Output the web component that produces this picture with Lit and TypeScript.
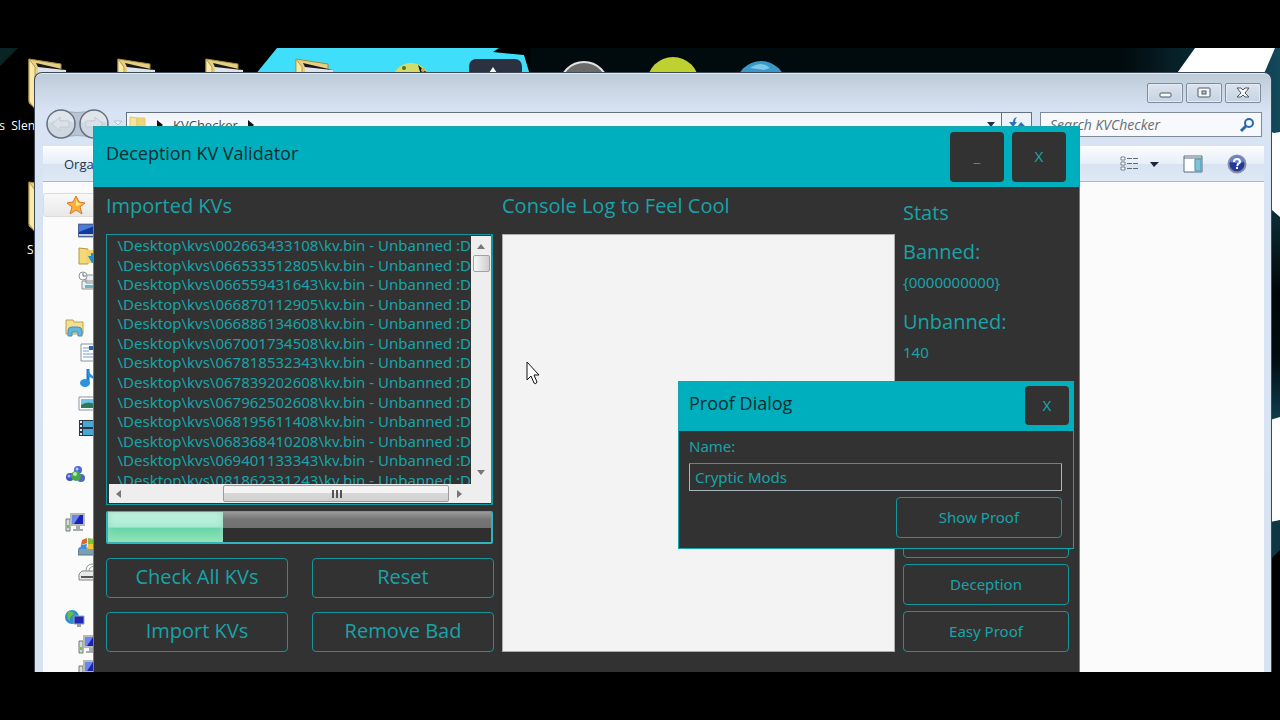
import { LitElement, html, css, svg } from "lit";
import { customElement, property } from "lit/decorators.js";

const IDS = [
  "002663433108", "066533512805", "066559431643", "066870112905", "066886134608",
  "067001734508", "067818532343", "067839202608", "067962502608", "068195611408",
  "068368410208", "069401133343", "081862331243",
];

const folder = html`<svg width="40" height="54" viewBox="0 0 40 54" aria-hidden="true">
  <path d="M1 2 L33 7 V50 H6 L1 46Z" fill="#e6cf80" stroke="#a58b42" />
  <path d="M10 9 L38 13 V50 H10Z" fill="#dfe4ea" />
  <path d="M8 6 L38 13 28 12 10 10Z" fill="#15181a" />
  <path d="M1 2 L7 10 V52 L1 44Z" fill="#fae9a8" stroke="#b79b4c" />
</svg>`;

const monitor = svg`<path d="M1 7h4v12H1z" fill="#d7dbd8" stroke="#6f7b72"/><path d="M2 13h2v3H2z" fill="#6c4"/>
  <path d="M6 2h13v11H6z" fill="#1a22b8" stroke="#b5b9b8" stroke-width="2"/><path d="M7 3h8L9 12H7z" fill="#6d86ee"/><path d="M11 14h4v3h3v2H8v-2h3z" fill="#a8acab"/>`;

const NAV: { first?: boolean; indent?: boolean; art: unknown }[] = [
  { indent: true, art: svg`<path d="M0 3h20v13H0z" fill="#123a9c" stroke="#7d8898"/><path d="M1 4h18L1 11z" fill="#4c79dc"/><path d="M1 14h18" stroke="#bcd" stroke-width="2"/>` },
  { indent: true, art: svg`<path d="M1 2l9 1v15H1z" fill="#f4d978" stroke="#b8973c"/><path d="M8 4h10v13H8z" fill="#f0d36a" /><path d="M10 10h3V7h5v10h-4z" fill="#1f8fd0"/>` },
  { indent: true, art: svg`<path d="M8 4h10v8H8zM4 10h12v8H4z" fill="#e9eef0" stroke="#8b9299"/><path d="M7 14h8v3H7z" fill="#68b6c4"/><circle cx="5" cy="5" r="4" fill="#fff" stroke="#8b9299"/><path d="M5 2v3h3" stroke="#667" fill="none"/>` },
  { first: true, art: svg`<path d="M1 4V2h7l1 2h9v12H1z" fill="#f3df90" stroke="#bea04e"/><path d="M3 18v-5q0-4 4-4h6q4 0 4 4v5h-4v-4H7v4z" fill="#62b6e4" stroke="#3f8fc0"/>` },
  { indent: true, art: svg`<path d="M3 1h16v17H3z" fill="#fbfdff" stroke="#8795a2"/><path d="M5 5h6M5 8h6M5 11h10M5 14h10" stroke="#7e9bc0"/><path d="M11 3h6v4h-6z" fill="#2767a8"/>` },
  { indent: true, art: svg`<path d="M10 1v14" stroke="#1c7dcc" stroke-width="3"/><ellipse cx="7" cy="15" rx="5" ry="4" fill="#2a93dc"/><path d="M10 1q1 5 7 8v4q-3-4-7-4z" fill="#2a93dc"/>` },
  { indent: true, art: svg`<path d="M1 4h19v13H1z" fill="#fff" stroke="#8795a2"/><path d="M3 6h16v9H3z" fill="#6fc4ee"/><path d="M3 12q7-5 16 0v3H3z" fill="#2d7a5a"/>` },
  { indent: true, art: svg`<path d="M1 2h18v16H1z" fill="#26384c"/><path d="M5 3h10v6H5zM5 11h10v6H5z" fill="#48a8d4"/><path d="M3 3v14M17 3v14" stroke="#dfe6ec" stroke-dasharray="2 2" stroke-width="2"/>` },
  { first: true, art: svg`<circle cx="5" cy="12" r="4" fill="#3c55c8"/><circle cx="13" cy="5" r="4" fill="#4a6ad8"/><circle cx="16" cy="13" r="4" fill="#5a66b8"/><circle cx="11" cy="11" r="5" fill="#46a846"/><circle cx="10" cy="9" r="2" fill="#b7efb0"/><circle cx="12" cy="4" r="1.500" fill="#b9c9ff"/><circle cx="4" cy="11" r="1.500" fill="#a9baf8"/>` },
  { first: true, art: monitor },
  { indent: true, art: svg`<path d="M1 11h18l1 7H0z" fill="#7ba0b4" stroke="#5a7684"/><path d="M4 3l5-2v5l-6 2z" fill="#e8622c"/><path d="M10 1l6 1-1 5h-5z" fill="#7cc242"/><path d="M3 8l6-1-1 5H2z" fill="#3d8ee0"/><path d="M10 7h6l-1 5h-6z" fill="#f4c534"/>` },
  { indent: true, art: svg`<path d="M1 12l3-3h15v9H1z" fill="#e8eaea" stroke="#7f8686"/><path d="M3 15h12" stroke="#555" stroke-width="2"/><path d="M8 9q0-7 7-7M11 9q0-4 5-5" fill="none" stroke="#8f9696"/>` },
  { first: true, art: svg`<circle cx="7" cy="8" r="7" fill="#2f8fc8"/><path d="M3 3q5-2 6 2-5 3-4 7-4-2-2-9z" fill="#63c04e"/><path d="M9 7h10v8H9z" fill="#2028b8" stroke="#9aa"/><path d="M12 15h4v3h-4z" fill="#98a0a8"/>` },
  { indent: true, art: monitor },
  { indent: true, art: monitor },
];

const shared = css`
  :host { display: block; box-sizing: border-box; font-family: "Open Sans", "Noto Sans", sans-serif; }
  *, *::before, *::after { box-sizing: border-box; }
  h1, h2, p, ul, dl, dd { margin: 0; padding: 0; font-weight: 400; }
  button, input { font: inherit; margin: 0; }
  svg { display: block; }
`;

const teal = css`
  .outlined { border: 1px solid #15959c; border-radius: 4px; background: #323232; color: #18a3a9; padding: 0 0 2px; font-family: "Noto Sans", sans-serif; font-size: 15px; }
  .square { border: 0; border-radius: 4px; background: #323232; color: #18a3a9; font-family: "Noto Sans", sans-serif; font-size: 15px; padding: 0 0 2px; }
`;

@customElement("explorer-window")
export class ExplorerWindow extends LitElement {
  static styles = [shared, css`
    :host { display: flex; flex-direction: column; border: 1px solid #3d4954; border-bottom: 0; border-radius: 8px 8px 0 0;
      background: linear-gradient(#bccbd9 0, #ccd8e6 20px, #d8e3f4 40px, #d8e3f2 100%); padding: 0 7px 0 8px; box-shadow: inset 0 1px #e4edf5; color: #24344c; font-size: 13px; }
    .caption { display: flex; justify-content: flex-end; gap: 3px; padding: 10px 3px 0 0; height: 39px; }
    .caption button { width: 36px; height: 20px; border: 1px solid #7d8b9b; border-radius: 2px; background: linear-gradient(#dbe4ee, #c7d3e2); padding: 0; display: grid; place-items: center; box-shadow: inset 0 0 0 1px #e2eaf3; }
    .address { display: flex; height: 25px; padding-right: 2px; }
    .nav { width: 83px; flex: none; }
    .nav svg { margin-top: -3px; }
    .path { display: flex; flex: 1; align-items: center; gap: 10px; border: 1px solid #65717e; background: linear-gradient(#f0f4f9, #fbfcfe); padding: 0 6px 0 2px; color: #444a50; }
    .path .grow { flex: 1; }
    .refresh { width: 30px; border: 1px solid #65717e; border-left: 0; background: #eef3f9; display: grid; place-items: center; padding: 0; }
    .search { display: flex; align-items: center; width: 222px; margin-left: 8px; border: 1px solid #7f8b98; background: #f7f9fc; padding: 0 6px 0 9px; }
    .search input { flex: 1; min-width: 0; border: 0; background: none; padding: 0; font-size: 14px; font-style: italic; outline: 0; }
    .search input::placeholder { color: #666c73; opacity: 1; }
    .tools { display: flex; align-items: center; height: 36px; margin-top: 9px; border-top: 1px solid #fff; border-bottom: 1px solid #a9b8ca; background: linear-gradient(#fafcfe, #e7eef8 50%, #d8e3f1 51%, #e0e9f5); padding: 0 17px 0 21px; }
    .tools span { flex: 1; }
    .tools button { border: 0; background: none; padding: 0; }
    .right { display: flex; align-items: center; gap: 24px; }
    .body { flex: 1; background: #fbfbfc; padding-top: 11px; min-height: 0; overflow: hidden; }
    .fav { width: 200px; height: 24px; border: 1px solid #dcdcdd; border-radius: 3px; background: linear-gradient(#f8f8f8, #e9e9ea); padding: 0 0 0 22px; display: flex; align-items: center; }
    .list { display: flex; flex-direction: column; list-style: none; padding: 1px 0 0 22px; }
    .list li { height: 25px; display: flex; align-items: center; }
    .list .indent { padding-left: 13px; }
    .list .first { margin-top: 22px; }
  `];
  render() {
    return html`
      <div class="caption">
        <button aria-label="Minimize"><svg width="16" height="14"><rect x="3" y="7" width="11" height="4" rx="1" fill="#f6f8fa" stroke="#4e5865"/></svg></button>
        <button aria-label="Maximize"><svg width="16" height="14"><rect x="2" y="2" width="12" height="9" rx="1" fill="#f6f8fa" stroke="#4e5865"/><rect x="6" y="5" width="4" height="3" fill="#b9c6d6" stroke="#4e5865"/></svg></button>
        <button aria-label="Close"><svg width="16" height="14"><path d="M2 2h4l2 2 2-2h4l-4 5 4 4h-4L8 9l-2 2H2l4-4z" fill="#f6f8fa" stroke="#4e5865"/></svg></button>
      </div>
      <div class="address">
        <div class="nav"><svg width="82" height="32"><path d="M18 1q16 5 33 0v28q-17-5-33 0z" fill="#b8c4d2" stroke="#a1adba"/>
          <g fill="#cfd7e0" stroke="#66717f" stroke-width="1.5"><circle cx="18" cy="15" r="14"/><circle cx="51" cy="15" r="14"/></g>
          <path d="M5 14a13 12 0 0 1 26 0q-13-6-26 0zM38 14a13 12 0 0 1 26 0q-13-6-26 0z" fill="#dfe5eb"/>
          <path d="M9 15l8-7v4h9v6h-9v4zM60 15l-8-7v4h-9v6h9v4z" fill="#dbe1e8" stroke="#c3ccd5"/><path d="M71 12h8l-4 4z" fill="#eef3f8" stroke="#b6c2d0"/></svg></div>
        <div class="path">
          <svg width="18" height="20"><path d="M1 2l7 1v15l-7-2z" fill="#f8e59a" stroke="#e2c877"/><path d="M8 3h8v14l-8 1z" fill="#f0d576" stroke="#e2c877"/></svg>
          <svg width="6" height="10"><path d="M0 0l6 5-6 5z" fill="#111"/></svg>
          <span>KVChecker</span>
          <svg width="6" height="10"><path d="M0 0l6 5-6 5z" fill="#111"/></svg>
          <span class="grow"></span>
          <svg width="8" height="5"><path d="M0 0h8L4 5z" fill="#1d2f57"/></svg>
        </div>
        <button class="refresh" aria-label="Refresh"><svg width="18" height="18"><path d="M9 1Q5 2 5 6H1l4 5 4-5H7q0-3 2-5zM13 6l-4 5h3q0 4-2 6 5-1 5-6h3z" fill="#2d72b8"/></svg></button>
        <div class="search"><input aria-label="Search" placeholder="Search KVChecker" />
          <svg width="16" height="16"><circle cx="10" cy="6" r="4" fill="#eef6ff" stroke="#2c67ab" stroke-width="2"/><path d="M7 9l-5 5" stroke="#2c67ab" stroke-width="3"/></svg></div>
      </div>
      <div class="tools"><span>Organize</span>
        <div class="right">
          <button aria-label="Views"><svg width="40" height="16"><path d="M2 1h4v3H2zM2 6h4v3H2zM2 11h4v3H2z" fill="#fff" stroke="#76828e"/><path d="M8 2.500h5M14 2.500h5M8 7.500h5M14 7.500h5M8 12.500h5M14 12.500h5" stroke="#5d6b78"/><path d="M31 6h9l-5 5z" fill="#1d2440"/></svg></button>
          <button aria-label="Preview pane"><svg width="20" height="18"><path d="M1 1h18v16H1z" fill="#fdfefe" stroke="#5b6e80"/><path d="M1 3h18" stroke="#5b6e80"/><path d="M12 4h6v12h-6z" fill="#80c3d6" stroke="#4b93a8"/></svg></button>
          <button aria-label="Help"><svg width="20" height="20"><circle cx="10" cy="10" r="8.500" fill="#25399a" stroke="#8790a8" stroke-width="2"/><path d="M3 8a7 6 0 0 1 14 0q-7 2-14 0z" fill="#6882d0"/><path d="M7 8q0-3 3-3t3 3q0 1-2 2l-1 2" fill="none" stroke="#fff" stroke-width="2"/><path d="M9 13h2v2H9z" fill="#fff"/></svg></button>
        </div>
      </div>
      <div class="body">
        <div class="fav"><svg width="20" height="20"><path d="M10 1l3 6 6 1-5 4 2 7-6-4-6 4 2-7-5-4 6-1z" fill="#fdb13a" stroke="#d8752a"/><path d="M10 4l2 4 4 1-6 2z" fill="#ffe58a"/></svg></div>
        <ul class="list">${NAV.map((n) => html`<li class="${n.indent ? "indent" : ""} ${n.first ? "first" : ""}"><svg width="20" height="20" viewBox="0 0 20 20" aria-hidden="true">${n.art}</svg></li>`)}</ul>
      </div>`;
  }
}

@customElement("proof-dialog")
export class ProofDialog extends LitElement {
  @property() name = "Cryptic Mods";
  static styles = [shared, teal, css`
    :host { border: 1px solid #15a3ac; background: #323232; color: #18a3a9; }
    .bar { display: flex; align-items: flex-start; justify-content: space-between; height: 49px; background: #00afbd; padding: 4px 4px 0 10px; color: #0d2c30; }
    .bar h2 { font-size: 18px; line-height: 34px; }
    .square { width: 44px; height: 39px; }
    .form { display: flex; flex-direction: column; padding: 3px 11px 10px 10px; font-family: "Noto Sans", sans-serif; font-size: 15px; }
    label { line-height: 24px; }
    input { height: 28px; margin-top: 5px; border: 1px solid #a9b6bd; border-top-color: #5f83a8; background: #323232; color: #18a3a9; padding: 0 5px 1px; border-radius: 1px; outline: 0; }
    .outlined { align-self: flex-end; width: 166px; height: 41px; margin-top: 6px; }
  `];
  render() {
    return html`<div class="bar"><h2>Proof Dialog</h2><button class="square">X</button></div>
      <div class="form"><label for="name">Name:</label><input id="name" .value=${this.name} /><button class="outlined">Show Proof</button></div>`;
  }
}

@customElement("validator-window")
export class ValidatorWindow extends LitElement {
  @property({ type: Number }) progress = 30;
  static styles = [shared, teal, css`
    :host { display: flex; flex-direction: column; border: 1px solid #15a3ac; border-bottom: 0; background: #323232; color: #18a3a9; }
    .bar { display: flex; justify-content: space-between; height: 60px; flex: none; background: #00afbd; padding: 5px 13px 0 12px; color: #0d2c30; }
    .bar h1 { font-size: 18px; line-height: 42px; }
    .bar div { display: flex; gap: 8px; }
    .square { width: 54px; height: 50px; }
    .cols { display: grid; grid-template-columns: 388px 1fr 166px; column-gap: 8px; padding: 0 10px 0 12px; }
    .col { display: flex; flex-direction: column; }
    h2 { font-size: 20px; line-height: 38px; height: 47px; }
    .kvs { display: grid; grid-template-columns: 1fr 20px; grid-template-rows: 1fr 19px; width: 387px; height: 271px; border: 1px solid #15959c; border-right-width: 2px; padding: 1px 0 1px 2px; }
    .view { overflow: hidden; min-height: 0; display: flex; flex-direction: column; align-items: flex-end; }
    .rows { display: grid; grid-auto-rows: 1fr; height: 254px; flex: none; list-style: none; font-family: "Noto Sans", sans-serif; font-size: 15px; white-space: nowrap; align-items: center; line-height: 19px; }
    .vbar { background: #eeeeee; display: flex; flex-direction: column; align-items: center; padding: 8px 0 9px; }
    .vthumb { width: 17px; height: 17px; margin: 6px 0 auto; border: 1px solid #a2a2a2; border-radius: 2px; background: linear-gradient(90deg, #f7f7f7, #cfcfcf); }
    .hbar { grid-column: 1 / 3; background: #eeeeee; display: flex; align-items: center; padding: 0 29px 0 7px; }
    .hthumb { width: 226px; height: 17px; margin: 0 8px 0 auto; border: 1px solid #9c9c9c; border-radius: 2px; background: linear-gradient(#f4f4f4 0 45%, #d8d8d8 50%, #d0d0d0); display: grid; place-items: center; }
    .meter { width: 387px; height: 33px; margin-top: 6px; border: 1px solid #2fb5bb; border-width: 1px 2px 2px; border-radius: 2px; background: linear-gradient(#9a9a9a, #757575 25%, #717171 52%, #2f2f2f 54%); }
    .fill { height: 100%; background: linear-gradient(#c9f5e4, #a6ebd0 50%, #67d5a8 54%, #8fe5b4); box-shadow: inset 0 0 7px #9fd8c0; }
    .actions { display: grid; grid-template-columns: 182px 182px; justify-content: space-between; row-gap: 14px; margin-top: 14px; }
    .actions button { height: 40px; font-family: "Open Sans", sans-serif; font-size: 20px; padding-bottom: 4px; }
    .log { flex: 1; background: #f3f3f3; border: 1px solid #a9adb0; min-width: 0; }
    .stats { padding-top: 9px; }
    .stats dt { font-size: 20px; line-height: 32px; }
    .stats dd { font-family: "Noto Sans", sans-serif; font-size: 15px; line-height: 28px; height: 38px; }
    .stats h2 { line-height: 34px; height: 40px; }
    .side { display: flex; flex-direction: column; gap: 6px; margin-top: auto; }
    .side button { height: 41px; }
  `];
  render() {
    return html`
      <header class="bar"><h1>Deception KV Validator</h1><div><button class="square">_</button><button class="square">X</button></div></header>
      <div class="cols">
        <section class="col">
          <h2>Imported KVs</h2>
          <div class="kvs">
            <div class="view"><ul class="rows">${IDS.map((id) => html`<li>\\Desktop\\kvs\\${id}\\kv.bin - Unbanned :D</li>`)}</ul></div>
            <div class="vbar"><svg width="8" height="5"><path d="M0 5h8L4 0z" fill="#777"/></svg><div class="vthumb"></div><svg width="8" height="5"><path d="M0 0h8L4 5z" fill="#777"/></svg></div>
            <div class="hbar"><svg width="5" height="8"><path d="M5 0v8L0 4z" fill="#777"/></svg><div class="hthumb"><svg width="11" height="8"><path d="M1 0h2v8H1zM5 0h2v8H5zM9 0h2v8H9z" fill="#555"/></svg></div><svg width="5" height="8"><path d="M0 0v8l5-4z" fill="#777"/></svg></div>
          </div>
          <div class="meter" role="progressbar" aria-valuenow=${this.progress}><div class="fill" style="width:${this.progress}%"></div></div>
          <div class="actions">
            <button class="outlined">Check All KVs</button><button class="outlined">Reset</button>
            <button class="outlined">Import KVs</button><button class="outlined">Remove Bad</button>
          </div>
        </section>
        <section class="col"><h2>Console Log to Feel Cool</h2><div class="log" role="log"></div></section>
        <section class="col stats">
          <h2>Stats</h2>
          <dl><dt>Banned:</dt><dd>{0000000000}</dd><dt>Unbanned:</dt><dd>140</dd></dl>
          <div class="side"><button class="outlined" aria-label="More"></button><button class="outlined">Deception</button><button class="outlined">Easy Proof</button></div>
        </section>
      </div>`;
  }
}

@customElement("app-root")
export class AppRoot extends LitElement {
  static styles = [shared, css`
    :host { height: 100vh; background: #000; padding: 48px 0; }
    .desktop { position: relative; height: 100%; overflow: hidden; background: #000; }
    .wall { position: absolute; inset: 0; width: 100%; height: 100%; }
    .item { position: absolute; top: 9px; }
    .f1 { left: 28px; } .f2 { left: 117px; } .f3 { left: 205px; } .f4 { left: 295px; } .item.f5 { left: 28px; top: 132px; }
    .label { position: absolute; color: #fff; font-size: 12px; line-height: 16px; white-space: nowrap; }
    .l1 { right: calc(100% - 35px); top: 70px; }
    .l2 { left: 27px; top: 194px; }
    explorer-window { position: absolute; inset: 24px 8px 0 34px; }
    validator-window { position: absolute; left: 93px; top: 78px; width: 987px; bottom: 0; }
    proof-dialog { position: absolute; left: 678px; top: 333px; width: 396px; }
    .cursor { position: absolute; left: 524px; top: 312px; }
  `];
  render() {
    return html`<main class="desktop">
      <svg class="wall" viewBox="0 0 1280 624" preserveAspectRatio="xMidYMin slice" aria-hidden="true">
        <defs><linearGradient id="g"><stop offset="0" stop-color="#010a0c"/><stop offset="1" stop-color="#12495b"/></linearGradient>
          <linearGradient id="v" x2="0" y2="1"><stop offset="0" stop-color="#0d2f3a"/><stop offset=".4" stop-color="#000506"/><stop offset=".7" stop-color="#010c10"/><stop offset="1" stop-color="#0f4152"/></linearGradient></defs>
        <path d="M0 0h18L0 18z" fill="#0a2324"/>
        <path d="M277 0h222l-6 4 31 3 6 20H255z" fill="#3fdffc"/>
        <path d="M530 0h590v26H530z" fill="#010a0c"/><path d="M1120 0h160v125h-160z" fill="url(#g)"/>
        <path d="M1195 0h80l-12 28h-88z" fill="#fff"/>
        <path d="M1260 160h20v215h-20z" fill="url(#v)"/>
        <path d="M1260 80l14 5 6-1v85l-8-7h-12z" fill="#fff"/>
        <path d="M1260 375l20-6v104l-20 4z" fill="#fff"/><path d="M1260 476l20-4v30l-20 20z" fill="#0d3743"/>
        <circle cx="411" cy="34" r="19" fill="#d3dc6a" /><path d="M418 17l12 10h-9z" fill="#14191a"/><circle cx="423" cy="22" r="2" fill="#ccb23f"/><circle cx="404" cy="20" r="2" fill="#5b6c20"/>
        <rect x="469" y="11" width="53" height="40" rx="7" fill="#2b3140"/><path d="M493 19l4 6h-8z" fill="#fff"/>
        <circle cx="584" cy="38" r="24" fill="#6b6b6b" stroke="#e4e4e4" stroke-width="2"/>
        <circle cx="673" cy="35" r="26" fill="#bfd130"/><circle cx="761" cy="38" r="25" fill="#3a98c8"/><path d="M750 20q12-8 20 0l-6 2z" fill="#7cc8e8"/>
      </svg>
      <div class="item f1">${folder}</div><div class="item f2">${folder}</div><div class="item f3">${folder}</div><div class="item f4">${folder}</div><div class="item f5">${folder}</div>
      <span class="label l1">s&nbsp; Slen</span><span class="label l2">S</span>
      <explorer-window></explorer-window>
      <validator-window></validator-window>
      <proof-dialog></proof-dialog>
      <svg class="cursor" width="16" height="26" aria-hidden="true"><path d="M3 2v18l4-4 3 7q2 2 3-1l-3-7h5z" fill="#fff" stroke="#111"/></svg>
    </main>`;
  }
}
